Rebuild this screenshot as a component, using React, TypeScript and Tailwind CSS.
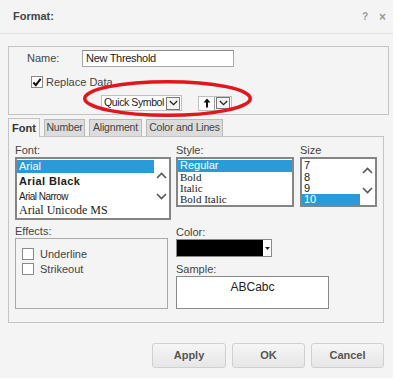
import type { ReactNode } from 'react';

const UI = "font-['Liberation_Sans',Arial,sans-serif]";

function ChevronUp() {
  return (
    <svg width="11" height="7" viewBox="0 0 11 7">
      <polyline points="1,6 5.5,1.5 10,6" fill="none" stroke="#555" strokeWidth="1.6" />
    </svg>
  );
}

function ChevronDown({ color = '#555', w = 11, h = 7 }: { color?: string; w?: number; h?: number }) {
  return (
    <svg width={w} height={h} viewBox="0 0 11 7">
      <polyline points="1,1 5.5,5.5 10,1" fill="none" stroke={color} strokeWidth="1.6" />
    </svg>
  );
}

function Box({ checked = false }: { checked?: boolean }) {
  return (
    <span className="w-[12px] h-[12px] border border-[#8a8a8a] bg-white flex items-center justify-center shrink-0">
      {checked && (
        <svg width="11" height="11" viewBox="0 0 11 11">
          <path d="M1.5 5.5 L4.2 8.5 L9.5 1.5" fill="none" stroke="#111" strokeWidth="2.2" />
        </svg>
      )}
    </span>
  );
}

function Label({ children }: { children: ReactNode }) {
  return <div className="h-[13px] leading-[13px] text-[11px] text-[#444] whitespace-nowrap">{children}</div>;
}

function Tab({ label, active = false, w }: { label: string; active?: boolean; w: string }) {
  return active ? (
    <div className={`${w} h-[19px] -mb-px relative z-10 bg-[#f4f4f4] border border-b-0 border-[#c4c4c4] flex items-center justify-center text-[11px] font-bold text-[#333] whitespace-nowrap`}>
      {label}
    </div>
  ) : (
    <div className={`${w} h-[17px] bg-[#dcdcdc] border border-b-0 border-[#b9b9b9] flex items-center justify-center text-[10.5px] tracking-[-0.2px] text-[#444] whitespace-nowrap`}>
      {label}
    </div>
  );
}

function Btn({ label, w }: { label: string; w: string }) {
  return (
    <button
      type="button"
      className={`${w} h-[25px] rounded-[3px] border border-[#d0d0d0] bg-gradient-to-b from-[#f6f6f6] to-[#e6e6e6] text-[11px] font-bold text-[#555]`}
    >
      {label}
    </button>
  );
}

function Row({ h, children, cls = '' }: { h: string; children: ReactNode; cls?: string }) {
  return <div className={`${h} flex items-center pl-[2px] whitespace-nowrap ${cls}`}>{children}</div>;
}

export default function App() {
  return (
    <div className={`${UI} relative w-[393px] h-[378px] bg-[#f4f4f4] flex flex-col`}>
      {/* header */}
      <div className="h-[34px] border-b border-[#e2e2e2] flex items-center pl-[13px] pr-[7px] shrink-0">
        <span className="text-[11px] font-bold text-[#444]">Format:</span>
        <span className="ml-auto text-[10px] font-bold text-[#999]">?</span>
        <span className="ml-[11px] text-[12px] font-bold text-[#999] leading-none">×</span>
      </div>

      <div className="pl-[8px]">
        {/* top fieldset */}
        <div className="mt-[12px] w-[381px] h-[69px] border border-[#c4c4c4] flex flex-col">
          <div className="flex items-center mt-[3px] h-[17px]">
            <span className="ml-[18px] w-[55px] text-[11px] text-[#444]">Name:</span>
            <div className="w-[152px] h-[17px] bg-white border border-[#a8a8a8] border-t-[#888] flex items-center pl-[3px] text-[11px] text-[#222] tracking-[-0.3px] whitespace-nowrap">
              New Threshold
            </div>
          </div>
          <div className="flex items-center mt-[9px] ml-[22px] h-[12px]">
            <Box checked />
            <span className="ml-[3px] text-[11px] text-[#444]">Replace Data</span>
          </div>
          <div className="flex items-center mt-[7px] h-[16px]">
            <div className="ml-[92px] w-[81px] h-[16px] bg-white border border-[#c0c0c0] flex items-center">
              <span className="pl-[2px] text-[10.5px] text-[#222] tracking-[-0.4px] whitespace-nowrap shrink-0">Quick Symbol</span>
              <span className="ml-auto mr-[1px] w-[14px] h-[13px] border border-[#777] bg-[#f3f3f3] flex items-center justify-center shrink-0">
                <ChevronDown color="#222" w={9} h={6} />
              </span>
            </div>
            <div className="ml-[16px] w-[34px] h-[15px] bg-white border border-[#c0c0c0] flex items-center">
              <span className="w-[16px] flex items-center justify-center border-r border-[#999] h-[13px]">
                <svg width="8" height="10" viewBox="0 0 8 10">
                  <path d="M4 0.5 L7.5 4.5 L5 4.5 L5 9.5 L3 9.5 L3 4.5 L0.5 4.5 Z" fill="#111" />
                </svg>
              </span>
              <span className="ml-auto mr-[1px] w-[14px] h-[12px] border border-[#777] bg-[#f3f3f3] flex items-center justify-center">
                <ChevronDown color="#222" w={9} h={6} />
              </span>
            </div>
          </div>
        </div>

        {/* tabs */}
        <div className="h-[21px] flex items-end gap-[3px]">
          <Tab label="Font" active w="w-[32px]" />
          <Tab label="Number" w="w-[41px] ml-[1px]" />
          <Tab label="Alignment" w="w-[53px] ml-[1px]" />
          <Tab label="Color and Lines" w="w-[77px] ml-[1px]" />
        </div>

        {/* tab panel */}
        <div className="w-[376px] h-[187px] border border-[#c4c4c4] flex pl-[6px] pt-[7px]">
          {/* left column */}
          <div className="w-[156px] flex flex-col">
            <Label>Font:</Label>
            <div className="w-[156px] h-[63px] bg-white border-2 border-[#858585] flex">
              <div className="w-[137px] flex flex-col pt-px text-[#222]">
                <Row h="h-[13px]" cls="bg-[#2a9bd8] text-white text-[11px]">Arial</Row>
                <Row h="h-[16px]" cls="text-[11px] font-black tracking-[0.4px]">Arial Black</Row>
                <Row h="h-[14px]" cls="text-[10px] tracking-[-0.5px] font-['Liberation_Sans_Narrow','Liberation_Sans',sans-serif]">Arial Narrow</Row>
                <Row h="h-[14px]" cls="text-[12px] font-['Liberation_Serif',serif]">Arial Unicode MS</Row>
              </div>
              <div className="flex-1 flex flex-col items-center pt-[13px] gap-[14px]">
                <ChevronUp />
                <ChevronDown />
              </div>
            </div>
            <div className="mt-[5px]">
              <Label>Effects:</Label>
            </div>
            <div className="w-[153px] h-[71px] border border-[#a9a9a9] flex flex-col pl-[6px] pt-[9px]">
              <div className="flex items-center h-[12px]">
                <Box />
                <span className="ml-[6px] text-[11px] text-[#444]">Underline</span>
              </div>
              <div className="flex items-center h-[12px] mt-[3px]">
                <Box />
                <span className="ml-[6px] text-[11px] text-[#444]">Strikeout</span>
              </div>
            </div>
          </div>

          {/* right column */}
          <div className="ml-[5px] flex flex-col">
            <div className="flex gap-[6px]">
              <div className="flex flex-col">
                <Label>Style:</Label>
                <div className="w-[118px] h-[50px] bg-white border-2 border-[#858585] flex flex-col pt-px text-[11px] leading-[11px] text-[#222]">
                  <Row h="h-[12px]" cls="bg-[#2a9bd8] text-white">Regular</Row>
                  <Row h="h-[11px]" cls="font-['Liberation_Serif',serif]">Bold</Row>
                  <Row h="h-[11px]" cls="font-['Liberation_Serif',serif]">Italic</Row>
                  <Row h="h-[12px]" cls="font-['Liberation_Serif',serif]">Bold Italic</Row>
                </div>
              </div>
              <div className="flex flex-col">
                <Label>Size</Label>
                <div className="w-[77px] h-[50px] bg-white border-2 border-[#858585] flex">
                  <div className="w-[58px] flex flex-col pt-px text-[11px] leading-[11px] text-[#222]">
                    <Row h="h-[12px]">7</Row>
                    <Row h="h-[11px]">8</Row>
                    <Row h="h-[11px]">9</Row>
                    <Row h="h-[12px]" cls="bg-[#2a9bd8] text-white">10</Row>
                  </div>
                  <div className="flex-1 flex flex-col items-center pt-[8px] gap-[13px]">
                    <ChevronUp />
                    <ChevronDown />
                  </div>
                </div>
              </div>
            </div>
            <div className="mt-[19px]">
              <Label>Color:</Label>
            </div>
            <div className="w-[96px] h-[18px] border border-[#8a8a8a] bg-white flex">
              <div className="w-[86px] bg-black" />
              <div className="flex-1 flex items-center justify-center">
                <svg width="5" height="3" viewBox="0 0 5 3">
                  <path d="M0 0 L5 0 L2.5 3 Z" fill="#222" />
                </svg>
              </div>
            </div>
            <div className="mt-[6px]">
              <Label>Sample:</Label>
            </div>
            <div className="w-[153px] h-[33px] border border-[#8a8a8a] bg-white flex justify-center pt-px text-[12px] text-[#222]">
              ABCabc
            </div>
          </div>
        </div>
      </div>

      {/* buttons */}
      <div className="mt-[20px] flex justify-end gap-[6px] pr-[9px]">
        <Btn label="Apply" w="w-[74px]" />
        <Btn label="OK" w="w-[73px]" />
        <Btn label="Cancel" w="w-[73px]" />
      </div>

      {/* red annotation ellipse */}
      <svg className="absolute left-[80px] top-[76px] pointer-events-none" width="176" height="46" viewBox="0 0 176 46">
        <ellipse cx="87.5" cy="22.5" rx="82.75" ry="16.75" fill="none" stroke="#e3161e" strokeWidth="3.5" />
      </svg>
    </div>
  );
}
